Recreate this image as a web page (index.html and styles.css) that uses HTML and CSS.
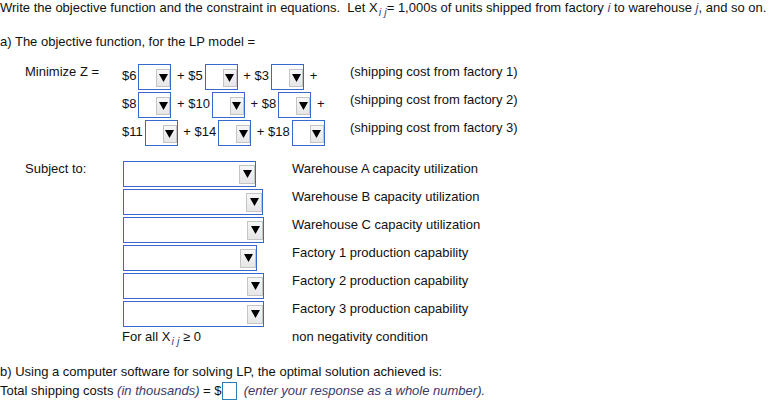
FILE: index.html
```html
<!DOCTYPE html>
<html>
<head>
<meta charset="utf-8">
<link rel="stylesheet" href="styles.css">
</head>
<body>
<p class="intro">Write the objective function and the constraint in equations.&nbsp; Let X<sub class="ij">i j</sub>= 1,000s of units shipped from factory <i class="var">i</i> to warehouse <i class="var">j</i>, and so on.</p>
<p class="part">a) The objective function, for the LP model =</p>

<div class="obj">
  <div class="label">Minimize Z =</div>
  <div class="terms">$6<span class="sel small"><span class="btn"><svg viewBox="0 0 9 8"><polygon points="0,0 9,0 4.5,8"/></svg></span></span> + $5<span class="sel small"><span class="btn"><svg viewBox="0 0 9 8"><polygon points="0,0 9,0 4.5,8"/></svg></span></span> + $3<span class="sel small"><span class="btn"><svg viewBox="0 0 9 8"><polygon points="0,0 9,0 4.5,8"/></svg></span></span> +</div>
  <div class="note">(shipping cost from factory 1)</div>

  <div class="label"></div>
  <div class="terms">$8<span class="sel small"><span class="btn"><svg viewBox="0 0 9 8"><polygon points="0,0 9,0 4.5,8"/></svg></span></span> + $10<span class="sel small"><span class="btn"><svg viewBox="0 0 9 8"><polygon points="0,0 9,0 4.5,8"/></svg></span></span> + $8<span class="sel small"><span class="btn"><svg viewBox="0 0 9 8"><polygon points="0,0 9,0 4.5,8"/></svg></span></span> +</div>
  <div class="note">(shipping cost from factory 2)</div>

  <div class="label"></div>
  <div class="terms">$11<span class="sel small"><span class="btn"><svg viewBox="0 0 9 8"><polygon points="0,0 9,0 4.5,8"/></svg></span></span> + $14<span class="sel small"><span class="btn"><svg viewBox="0 0 9 8"><polygon points="0,0 9,0 4.5,8"/></svg></span></span> + $18<span class="sel small"><span class="btn"><svg viewBox="0 0 9 8"><polygon points="0,0 9,0 4.5,8"/></svg></span></span></div>
  <div class="note">(shipping cost from factory 3)</div>
</div>

<div class="cons">
  <div class="label">Subject to:</div>
  <div class="cell"><span class="sel big w133"><span class="btn"><svg viewBox="0 0 9 8"><polygon points="0,0 9,0 4.5,8"/></svg></span></span></div>
  <div class="desc">Warehouse A capacity utilization</div>

  <div class="label"></div>
  <div class="cell"><span class="sel big w140"><span class="btn"><svg viewBox="0 0 9 8"><polygon points="0,0 9,0 4.5,8"/></svg></span></span></div>
  <div class="desc">Warehouse B capacity utilization</div>

  <div class="label"></div>
  <div class="cell"><span class="sel big w141"><span class="btn"><svg viewBox="0 0 9 8"><polygon points="0,0 9,0 4.5,8"/></svg></span></span></div>
  <div class="desc">Warehouse C capacity utilization</div>

  <div class="label"></div>
  <div class="cell"><span class="sel big w134"><span class="btn"><svg viewBox="0 0 9 8"><polygon points="0,0 9,0 4.5,8"/></svg></span></span></div>
  <div class="desc">Factory 1 production capability</div>

  <div class="label"></div>
  <div class="cell"><span class="sel big w141"><span class="btn"><svg viewBox="0 0 9 8"><polygon points="0,0 9,0 4.5,8"/></svg></span></span></div>
  <div class="desc">Factory 2 production capability</div>

  <div class="label"></div>
  <div class="cell"><span class="sel big w141"><span class="btn"><svg viewBox="0 0 9 8"><polygon points="0,0 9,0 4.5,8"/></svg></span></span></div>
  <div class="desc">Factory 3 production capability</div>

  <div class="label"></div>
  <div class="desc">For all X<sub class="ij">i j</sub> &ge; 0</div>
  <div class="desc">non negativity condition</div>
</div>

<p class="b1">b) Using a computer software for solving LP, the optimal solution achieved is:</p>
<p class="b2">Total shipping costs <i class="hint">(in thousands)</i> = $<span class="ans"></span>&nbsp; <i class="hint">(enter your response as a whole number).</i></p>
</body>
</html>
```

FILE: styles.css
```css
html, body {
  margin: 0;
  padding: 0;
  background: #ffffff;
}

body {
  font-family: "Liberation Sans", Arial, sans-serif;
  font-size: 13px;
  color: #111111;
  width: 769px;
  height: 407px;
  overflow: hidden;
}

p {
  margin: 0;
}

.intro {
  line-height: 15px;
  white-space: nowrap;
}

.ij {
  font-size: 11px;
  font-style: italic;
  color: #3c4f86;
  vertical-align: -4px;
  line-height: 0;
  margin-left: 1px;
}

.var {
  color: #3c4f86;
}

.part {
  margin-top: 19px;
  line-height: 15px;
}

/* objective function grid */
.obj {
  display: grid;
  grid-template-columns: 97px 228px auto;
  grid-auto-rows: 28px;
  padding-left: 25px;
  margin-top: 14px;
}

.label,
.note,
.desc {
  line-height: 15px;
  padding-top: 1px;
  white-space: nowrap;
}

.terms {
  line-height: 25px;
  white-space: nowrap;
}

/* select boxes */
.sel {
  box-sizing: border-box;
  display: inline-flex;
  justify-content: flex-end;
  align-items: center;
  vertical-align: top;
  height: 26px;
  border: 1px solid #3868cc;
  background: #ffffff;
  margin-top: 1px;
}

.sel.small {
  width: 33px;
  margin-left: 2px;
  margin-right: 2px;
}

.sel.big {
  margin-left: 1px;
}

.w133 { width: 133px; }
.w134 { width: 134px; }
.w140 { width: 140px; }
.w141 { width: 141px; }

.btn {
  box-sizing: border-box;
  display: flex;
  align-items: center;
  justify-content: center;
  border: 1px solid #c4c4c4;
  background: linear-gradient(#f7f7f7, #e6e6e6);
}

.small .btn {
  width: 14px;
  height: 18px;
  margin-top: 1px;
}

.big .btn {
  width: 16px;
  height: 19px;
}

.btn svg {
  width: 9px;
  height: 8px;
  fill: #000000;
  display: block;
}

/* constraints grid */
.cons {
  display: grid;
  grid-template-columns: 97px 170px auto;
  grid-auto-rows: 28px;
  padding-left: 25px;
  margin-top: 13px;
}

.cell {
  display: flex;
}

/* part b */
.b1 {
  margin-top: 6px;
  line-height: 19px;
}

.b2 {
  line-height: 19px;
  white-space: nowrap;
}

.hint {
  color: #3a3a6a;
}

.ans {
  box-sizing: border-box;
  display: inline-block;
  width: 15px;
  height: 18px;
  border: 1px solid #2a7fba;
  vertical-align: -5px;
}
```
